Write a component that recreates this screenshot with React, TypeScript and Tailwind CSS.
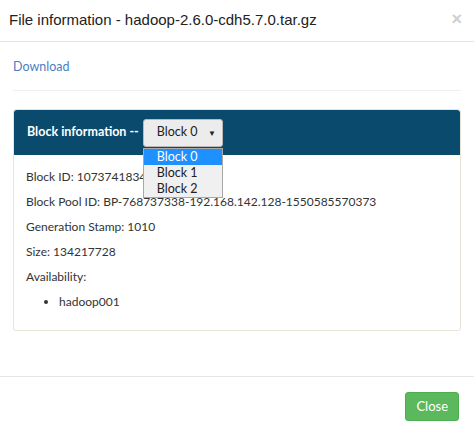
const blocks = ["Block 0", "Block 1", "Block 2"];

const details = [
  "Block ID: 1073741834",
  "Block Pool ID: BP-768737338-192.168.142.128-1550585570373",
  "Generation Stamp: 1010",
  "Size: 134217728",
  "Availability:",
];

export default function App() {
  return (
    <div className="w-[474px] h-[436px] bg-white flex flex-col font-['Lato',sans-serif] text-[#333]">
      {/* Header */}
      <div className="h-[42px] flex items-center justify-between pl-[9px] pr-[12px] border-b border-[#e5e5e5]">
        <h4 className="text-[15px] font-['Liberation_Sans',Arial,sans-serif] text-[#222] leading-none pb-[3px]">
          File information - hadoop-2.6.0-cdh5.7.0.tar.gz
        </h4>
        <span className="text-[18px] font-bold text-[#cfcfcf] leading-none font-['Liberation_Sans',Arial,sans-serif] pb-[3px]">×</span>
      </div>

      {/* Body */}
      <div className="flex-1 px-[13px] pt-[15px]">
        <a href="#" className="block text-[12.5px] text-[#4b7fbf] leading-[20px]">
          Download
        </a>
        <hr className="mt-[13px] border-t border-[#eee]" />

        {/* Panel */}
        <div className="mt-[18px] border border-[#e8e4d8] rounded-[3px]">
          <div className="relative h-[45px] bg-[#0a4a6c] rounded-t-[3px] flex items-center pl-[13px] gap-[4px]">
            <span className="text-[12.5px] text-white font-bold">Block information --</span>
            <div className="relative">
              <div className="w-[80px] h-[28px] bg-[#ececec] border border-[#b9b9b9] rounded-[3px] flex items-center justify-between pl-[13px] pr-[6px] text-[12.5px] text-[#222]">
                <span>Block 0</span>
                <span className="text-[8px]">▼</span>
              </div>
              {/* Open list */}
              <ul className="absolute left-0 top-[29px] w-[80px] bg-[#f0f0f0] border border-[#a8a8a8] text-[12.5px] leading-[16px] text-[#222] z-10">
                {blocks.map((b, i) => (
                  <li
                    key={b}
                    className={i === 0 ? "pl-[13px] bg-[#1e90ff] text-white" : "pl-[13px]"}
                  >
                    {b}
                  </li>
                ))}
              </ul>
            </div>
          </div>
          <div className="px-[12px] pt-[9px] pb-[16px] text-[12px] leading-[25px] text-[#333]">
            {details.map((d) => (
              <p key={d}>{d}</p>
            ))}
            <ul className="list-disc pl-[33px]">
              <li>hadoop001</li>
            </ul>
          </div>
        </div>
      </div>

      {/* Footer */}
      <div className="h-[60px] border-t border-[#e5e5e5] flex items-start justify-end pt-[15px] pr-[15px]">
        <button className="h-[29px] px-[10px] rounded-[3px] bg-[#5cb85c] border border-[#4cae4c] text-white text-[13px]">
          Close
        </button>
      </div>
    </div>
  );
}
